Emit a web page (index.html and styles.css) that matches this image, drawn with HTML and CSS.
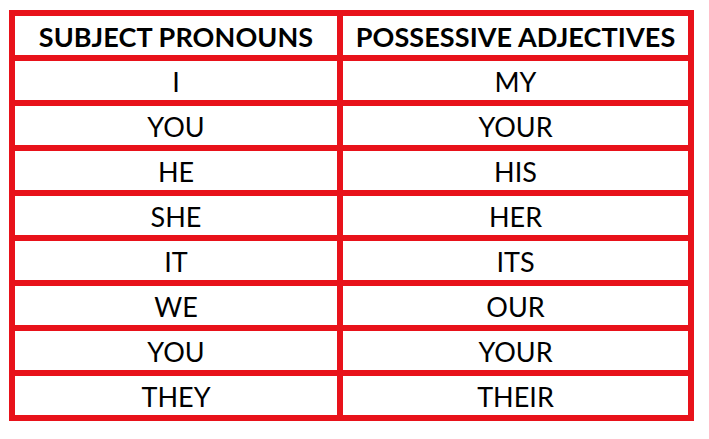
FILE: index.html
```html
<!DOCTYPE html>
<html>
<head>
<meta charset="utf-8">
<link rel="stylesheet" href="styles.css">
</head>
<body>
<div class="table">
  <div class="cell head">SUBJECT PRONOUNS</div>
  <div class="cell head">POSSESSIVE ADJECTIVES</div>
  <div class="cell">I</div><div class="cell">MY</div>
  <div class="cell">YOU</div><div class="cell">YOUR</div>
  <div class="cell">HE</div><div class="cell">HIS</div>
  <div class="cell">SHE</div><div class="cell">HER</div>
  <div class="cell">IT</div><div class="cell">ITS</div>
  <div class="cell">WE</div><div class="cell">OUR</div>
  <div class="cell">YOU</div><div class="cell">YOUR</div>
  <div class="cell">THEY</div><div class="cell">THEIR</div>
</div>
</body>
</html>
```
FILE: styles.css
```css
html, body {
  margin: 0;
  background: #ffffff;
}
body {
  padding: 10px 0 0 9px;
  font-family: Lato, "Open Sans", sans-serif;
  color: #000;
}
.table {
  display: grid;
  grid-template-columns: 322px 345px;
  grid-auto-rows: 39px;
  gap: 6px;
  padding: 6px;
  width: max-content;
  background: #e8121a;
}
.cell {
  background: #fff;
  display: flex;
  align-items: center;
  justify-content: center;
  font-size: 27px;
  font-weight: 400;
  line-height: 1;
  padding-top: 1px;
}
.head {
  font-weight: 700;
  font-size: 27px;
  letter-spacing: 0.1px;
}
```
